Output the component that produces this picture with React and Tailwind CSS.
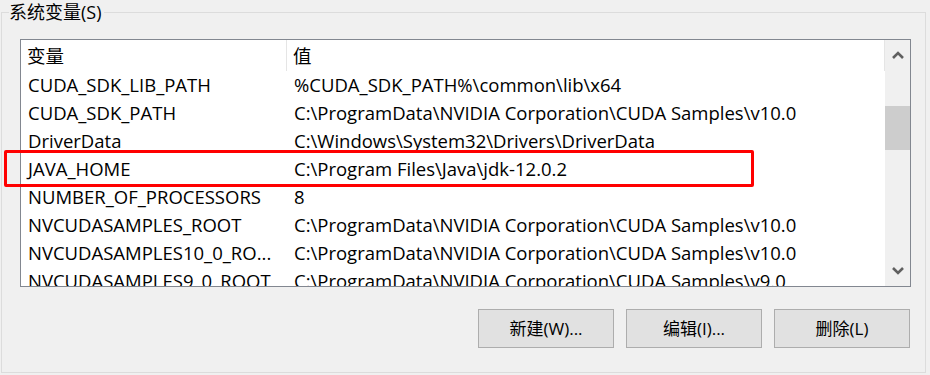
import React from "react";

const rows = [
  ["CUDA_SDK_LIB_PATH", "%CUDA_SDK_PATH%\\common\\lib\\x64"],
  ["CUDA_SDK_PATH", "C:\\ProgramData\\NVIDIA Corporation\\CUDA Samples\\v10.0"],
  ["DriverData", "C:\\Windows\\System32\\Drivers\\DriverData"],
  ["JAVA_HOME", "C:\\Program Files\\Java\\jdk-12.0.2"],
  ["NUMBER_OF_PROCESSORS", "8"],
  ["NVCUDASAMPLES_ROOT", "C:\\ProgramData\\NVIDIA Corporation\\CUDA Samples\\v10.0"],
  ["NVCUDASAMPLES10_0_RO...", "C:\\ProgramData\\NVIDIA Corporation\\CUDA Samples\\v10.0"],
  ["NVCUDASAMPLES9_0_ROOT", "C:\\ProgramData\\NVIDIA Corporation\\CUDA Samples\\v9.0"],
];

function Btn({ children }) {
  return (
    <button className="w-[136px] h-[39px] bg-[#e1e1e1] border border-[#adadad] text-[17px] text-black flex items-center justify-center">
      {children}
    </button>
  );
}

export default function App() {
  return (
    <div
      className="w-[930px] h-[375px] bg-[#f0f0f0] relative overflow-hidden text-black font-['Open_Sans','Noto_Sans_CJK_SC',sans-serif]"
    >
      <div className="absolute left-[9px] top-[1px] text-[18px] leading-[22px] bg-[#f0f0f0] pr-[2px] z-10">
        系统变量(S)
      </div>
      <div className="ml-[1px] mt-[12px] w-[925px] h-[361px] border border-[#dcdcdc] flex flex-col">
        <div className="ml-[18px] mt-[26px] w-[891px] h-[248px] border border-[#828790] bg-white flex overflow-hidden">
          <div className="flex-1 flex flex-col min-w-0">
            <div className="h-[31px] flex items-center text-[18.5px] shrink-0">
              <div className="w-[266px] pl-[6px] h-full flex items-center border-r border-[#e5e5e5]">变量</div>
              <div className="flex-1 pl-[6px] h-full flex items-center border-r border-[#e5e5e5]">值</div>
            </div>
            {rows.map(([k, v]) => (
              <div key={k} className="h-[28px] flex items-center text-[18.5px] shrink-0 whitespace-nowrap">
                <div className="w-[266px] pl-[7px] shrink-0">{k}</div>
                <div className="flex-1 pl-[7px]">{v}</div>
              </div>
            ))}
          </div>
          <div className="w-[25px] bg-[#f0f0f0] flex flex-col shrink-0">
            <div className="h-[30px] flex items-center justify-center">
              <svg width="12" height="8" viewBox="0 0 12 8">
                <path d="M1 7 L6 2 L11 7" fill="none" stroke="#606060" strokeWidth="2.6" />
              </svg>
            </div>
            <div className="flex-1 flex flex-col">
              <div className="h-[36px]" />
              <div className="h-[44px] bg-[#cdcdcd]" />
            </div>
            <div className="h-[30px] flex items-center justify-center">
              <svg width="12" height="8" viewBox="0 0 12 8">
                <path d="M1 1 L6 6 L11 1" fill="none" stroke="#606060" strokeWidth="2.6" />
              </svg>
            </div>
          </div>
        </div>
        <div className="mt-[22px] mr-[15px] flex justify-end gap-[12px]">
          <Btn>新建(W)...</Btn>
          <Btn>编辑(I)...</Btn>
          <Btn>删除(L)</Btn>
        </div>
      </div>
      <div className="absolute left-[4px] top-[150px] w-[750px] h-[37px] border-[3px] border-[#ff0000] rounded-[2px] pointer-events-none" />
    </div>
  );
}
